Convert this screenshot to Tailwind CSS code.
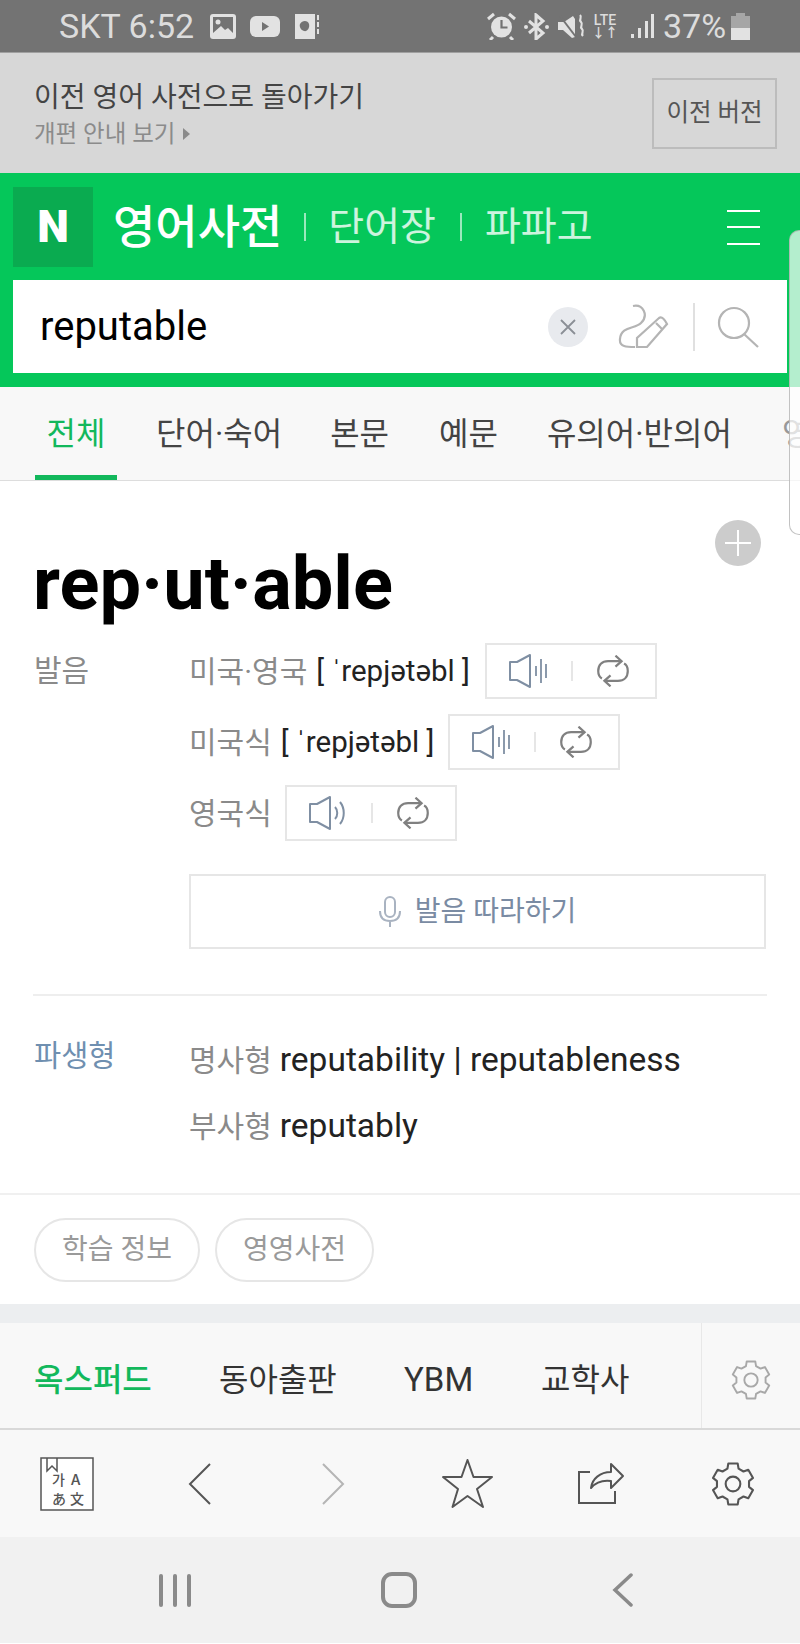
<!DOCTYPE html>
<html lang="ko">
<head>
    <meta charset="UTF-8">
    <meta name="viewport" content="width=device-width, initial-scale=1.0">
    <title>영어사전</title>
    <script src="https://cdn.jsdelivr.net/npm/@tailwindcss/browser@4"></script>
</head>
<body class="font-[Roboto,'Noto_Sans_CJK_KR',sans-serif]">
<svg class="hidden">
    <symbol id="repeat" viewBox="3 3 26 26">
        <path d="M23 8H12C7 8 4 11 4 16c0 3 1 5 3 6M9 24h11c5 0 8-3 8-8 0-3-1-5-3-6" fill="none" stroke="currentColor" stroke-width="1.800"/>
        <path d="M18 3.500l5 4.500-5 4.500M14 19.500l-5 4.500 5 4.500" fill="none" stroke="currentColor" stroke-width="1.800"/>
    </symbol>
    <symbol id="speaker-wave" viewBox="0 0 40 36">
        <path d="M2 9h7L22 2v32L9 27H2z" fill="none" stroke="currentColor" stroke-width="2" stroke-linejoin="round"/>
        <path d="M28 13v10M33 6v24M38 11v14" fill="none" stroke="currentColor" stroke-width="1.800"/>
    </symbol>
    <symbol id="gear" viewBox="0 0 42 42">
        <path d="M16.5 1.500H25.500L26.300 6.400L31 9.100L35.600 7.400L40.100 15.200L36.300 18.300V23.700L40.100 26.800L35.600 34.600L31 32.900L26.300 35.600L25.500 40.500H16.500L15.700 35.600L11 32.900L6.400 34.600L1.900 26.800L5.700 23.700V18.300L1.900 15.200L6.400 7.400L11 9.100L15.700 6.400z" fill="none" stroke="currentColor" stroke-width="2" stroke-linejoin="round"/>
        <circle cx="21" cy="21" r="7" fill="none" stroke="currentColor" stroke-width="2"/>
    </symbol>
</svg>

<div class="relative w-[800px] h-[1644px] overflow-hidden bg-white">
    <!-- status bar -->
    <div class="h-[53px] bg-[#737373] flex items-center text-[#dcdcdc] border-b border-[#a0a0a0]">
        <span class="ml-[59px] w-[138px] text-[34px] leading-none whitespace-nowrap">SKT 6:52</span>
        <svg class="ml-[13px]" width="26" height="25" viewBox="0 0 26 25"><rect width="26" height="25" rx="3" fill="#e2e2e2"/><rect x="3" y="3" width="20" height="16" fill="#737373"/><circle cx="8" cy="8" r="2.500" fill="#e2e2e2"/><path d="M3 19l8-7 4 4 3-2 5 5z" fill="#e2e2e2"/></svg>
        <svg class="ml-[14px]" width="30" height="21" viewBox="0 0 30 21"><rect width="30" height="21" rx="6" fill="#e2e2e2"/><path d="M12 6l7 4.500-7 4.500z" fill="#737373"/></svg>
        <svg class="ml-[14px]" width="25" height="25" viewBox="0 0 25 25"><path d="M1 0h20v25H1z" fill="#e2e2e2"/><path d="M23 1h2v5h-2zM23 8h2v5h-2zM23 15h2v5h-2z" fill="#e2e2e2"/><path d="M6 10c2-4 8-4 9 0 1 4-2 8-5 7-3-1-5-4-4-7z" fill="#737373"/></svg>
        <svg class="ml-[168px]" width="29" height="28" viewBox="0 0 29 28"><circle cx="14.500" cy="15" r="10.500" fill="#e2e2e2"/><path d="M14.500 8v7.500h6" fill="none" stroke="#737373" stroke-width="2.200"/><path d="M1 7l6-5M28 7l-6-5M6 25l-3 3M23 25l3 3" stroke="#e2e2e2" stroke-width="3"/></svg>
        <svg class="ml-[7px]" width="27" height="27" viewBox="0 0 27 27"><path d="M13 2l7 6-7 6 7 6-7 6zM13 14L6 8M13 14l-7 6" fill="none" stroke="#e2e2e2" stroke-width="3"/><circle cx="3" cy="14" r="2" fill="#e2e2e2"/><circle cx="24" cy="14" r="2" fill="#e2e2e2"/></svg>
        <svg class="ml-[7px]" width="29" height="27" viewBox="0 0 29 27"><path d="M1 9h6l9-6 2 3v18l-3 1-9-8H1z" fill="#e2e2e2"/><path d="M3 3l16 21" stroke="#737373" stroke-width="2"/><path d="M23 2c3 3-2 4 1 7s-2 4 1 7-2 4 1 7" fill="none" stroke="#e2e2e2" stroke-width="2.200"/></svg>
        <div class="ml-[6px] w-[26px] flex flex-col items-center text-[14px] leading-[14px] font-medium">
            <span>LTE</span>
            <span class="text-[13px] leading-[12px] font-bold">↓↑</span>
        </div>
        <svg class="ml-[12px]" width="24" height="26" viewBox="0 0 24 26"><path d="M1 21h3v4H1zM8 15h3v10H8zM15 8h3v17h-3zM21 1h3v24h-3z" fill="#e2e2e2"/></svg>
        <span class="ml-[9px] text-[34px] leading-none">37%</span>
        <div class="ml-[5px] w-[19px] h-[27px] flex flex-col items-center">
            <div class="w-[9px] h-[3px] bg-[#a6a6a6]"></div>
            <div class="w-[19px] h-[12px] bg-[#a6a6a6]"></div>
            <div class="w-[19px] h-[12px] bg-[#e2e2e2]"></div>
        </div>
    </div>

    <!-- old version notice -->
    <div class="h-[120px] bg-[#d7d7d7] flex items-center justify-between pl-[34px] pr-[23px]">
        <div class="pt-[2px]">
            <p class="text-[28px] leading-[40px] text-[#444444]">이전 영어 사전으로 돌아가기</p>
            <p class="text-[23.500px] leading-[32px] text-[#8b8b8b] flex items-center gap-[8px]">개편 안내 보기 <span class="w-0 h-0 border-y-[6px] border-y-transparent border-l-[7px] border-l-[#8b8b8b]"></span></p>
        </div>
        <div class="w-[125px] h-[71px] border-2 border-[#bcbcbc] flex items-center justify-center text-[24.500px] text-[#555555]">이전 버전</div>
    </div>

    <!-- green header -->
    <div class="h-[214px] bg-[#05c75a] px-[13px] pt-[14px]">
        <div class="h-[80px] flex items-center">
            <div class="w-[80px] h-[80px] bg-[#0aab50] flex items-center justify-center text-white text-[45px] font-black">N</div>
            <span class="ml-[20px] text-white text-[46px] font-medium leading-none">영어사전</span>
            <span class="ml-[22px] w-[2px] h-[28px] bg-white/60"></span>
            <span class="ml-[22px] text-white/80 text-[39px] leading-none">단어장</span>
            <span class="ml-[24px] w-[2px] h-[28px] bg-white/60"></span>
            <span class="ml-[23px] text-white/80 text-[39px] leading-none">파파고</span>
            <div class="ml-auto mr-[27px] w-[33px] h-[35px] flex flex-col justify-between">
                <div class="h-[2px] bg-white"></div>
                <div class="h-[2px] bg-white"></div>
                <div class="h-[2px] bg-white"></div>
            </div>
        </div>
        <div class="mt-[13px] h-[93px] bg-white flex items-center pl-[27px] pr-[28px]">
            <span class="text-[40px] text-black">reputable</span>
            <div class="ml-auto w-[40px] h-[40px] rounded-full bg-[#e8eaee] flex items-center justify-center">
                <svg width="18" height="18" viewBox="0 0 18 18"><path d="M2 2l14 14M16 2L2 16" stroke="#8b8f96" stroke-width="1.800"/></svg>
            </div>
            <svg class="ml-[30px]" width="52" height="46" viewBox="619 303 52 46" fill="none" stroke="#b4b4b4" stroke-width="2.200">
                <path d="M634 305c10-2 16 9 8 17-6 6-20 3-21 16-1 8 7 8 15 8"/>
                <path d="M638 346v-9l22-20c3-2 6 2 8 6l-20 23zM657 322l6 6"/>
            </svg>
            <div class="ml-[23px] w-[2px] h-[48px] bg-[#e0e0e0]"></div>
            <svg class="ml-[22px]" width="42" height="42" viewBox="0 0 42 42" fill="none" stroke="#b4b4b4" stroke-width="2.200"><circle cx="17" cy="17" r="15"/><path d="M27 28l14 13"/></svg>
        </div>
    </div>

    <!-- section tabs -->
    <div class="h-[94px] bg-[#f8f8f8] border-b border-[#dddddd] flex pl-[35px] text-[32px] text-[#444444] overflow-hidden whitespace-nowrap">
        <div class="w-[82px] shrink-0 flex items-center justify-center text-[#12b85c] border-b-[5px] border-[#12b85c] pt-[5px]">전체</div>
        <span class="ml-[39px] self-center">단어·숙어</span>
        <span class="ml-[48px] self-center">본문</span>
        <span class="ml-[50px] self-center">예문</span>
        <span class="ml-[49px] self-center">유의어·반의어</span>
        <span class="ml-[50px] self-center text-[#999999]">영영</span>
    </div>

    <!-- entry -->
    <div class="h-[823px] relative">
        <div class="pl-[33px] pt-[58px] text-[74px] leading-[90px] font-bold text-black">rep·ut·able</div>

        <div class="mt-[14px] pl-[34px] flex">
            <span class="w-[155px] pt-[8px] leading-[40px] text-[30px] text-[#8a8a8a]">발음</span>
            <div class="flex-1 flex flex-col gap-[15px] pr-[34px]">
                <div class="h-[56px] flex items-center text-[30px] text-[#8a8a8a]">
                    <span>미국·영국</span>
                    <span class="ml-[9px] mr-[15px] text-[#222222] text-[29.500px]">[ ˈrepjətəbl ]</span>
                    <div class="w-[172px] h-[56px] border-2 border-[#e6e6e6] flex items-center text-[#7f8fa3]">
                        <svg class="ml-[21px] w-[40px] h-[36px]"><use href="#speaker-wave"/></svg>
                        <div class="ml-[23px] w-[2px] h-[20px] bg-[#e6e6e6]"></div>
                        <svg class="ml-[24px] w-[32px] h-[32px] text-[#808080]"><use href="#repeat"/></svg>
                    </div>
                </div>
                <div class="h-[56px] flex items-center text-[30px] text-[#8a8a8a]">
                    <span>미국식</span>
                    <span class="ml-[9px] mr-[14px] text-[#222222] text-[29.500px]">[ ˈrepjətəbl ]</span>
                    <div class="w-[172px] h-[56px] border-2 border-[#e6e6e6] flex items-center text-[#7f8fa3]">
                        <svg class="ml-[21px] w-[40px] h-[36px]"><use href="#speaker-wave"/></svg>
                        <div class="ml-[23px] w-[2px] h-[20px] bg-[#e6e6e6]"></div>
                        <svg class="ml-[24px] w-[32px] h-[32px] text-[#808080]"><use href="#repeat"/></svg>
                    </div>
                </div>
                <div class="h-[56px] flex items-center text-[30px] text-[#8a8a8a]">
                    <span>영국식</span>
                    <div class="ml-[13px] w-[172px] h-[56px] border-2 border-[#e6e6e6] flex items-center text-[#7f8fa3]">
                        <svg class="ml-[21px]" width="40" height="36" viewBox="0 0 40 36" fill="none" stroke="currentColor" stroke-width="2"><path d="M2 9h7L22 2v32L9 27H2z" stroke-linejoin="round"/><path d="M27 12c3 3 3 9 0 12M32 7c5 6 5 16 0 22"/></svg>
                        <div class="ml-[23px] w-[2px] h-[20px] bg-[#e6e6e6]"></div>
                        <svg class="ml-[24px] w-[32px] h-[32px] text-[#808080]"><use href="#repeat"/></svg>
                    </div>
                </div>
                <div class="mt-[18px] h-[75px] border-2 border-[#e6e6e6] flex items-center justify-center gap-[14px] text-[28px] text-[#7a8ba3]">
                    <svg width="22" height="31" viewBox="0 0 22 31" fill="none" stroke="#a9b3c1" stroke-width="2"><rect x="6" y="1" width="10" height="20" rx="5"/><path d="M1 15c0 7 4 10 10 10s10-3 10-10M11 25v6"/></svg>
                    <span>발음 따라하기</span>
                </div>
            </div>
        </div>

        <div class="mx-[33px] mt-[45px] border-t-2 border-[#eeeeee]"></div>

        <div class="mt-[38px] pl-[34px] flex">
            <span class="w-[155px] pt-[2px] text-[29.500px] leading-[40px] text-[#6f8fb0]">파생형</span>
            <div class="text-[30px] text-[#8a8a8a]">
                <div class="h-[40px] mt-[6px] flex items-center"><span>명사형</span><span class="ml-[8px] text-[33.500px] text-[#222222]">reputability | reputableness</span></div>
                <div class="h-[40px] mt-[26px] flex items-center"><span>부사형</span><span class="ml-[8px] text-[33.500px] text-[#222222]">reputably</span></div>
            </div>
        </div>

        <div class="mt-[47px] border-t-2 border-[#f0f0f0] pt-[23px] pl-[34px] flex gap-[15px] text-[28px] text-[#9a9a9a]">
            <div class="w-[166px] h-[64px] rounded-full border-2 border-[#e6e6e6] flex items-center justify-center">학습 정보</div>
            <div class="w-[159px] h-[64px] rounded-full border-2 border-[#e6e6e6] flex items-center justify-center">영영사전</div>
        </div>

        <div class="absolute left-[715px] top-[39px] w-[46px] h-[46px] rounded-full bg-[#cccccc] flex items-center justify-center">
            <svg width="26" height="26" viewBox="0 0 26 26"><path d="M13 0v26M0 13h26" stroke="#ffffff" stroke-width="2"/></svg>
        </div>
    </div>

    <div class="h-[19px] bg-[#eceef0]"></div>

    <!-- dictionary tabs -->
    <div class="h-[105px] bg-[#f8f8f8] flex items-center pl-[34px] text-[32px] text-[#333333] whitespace-nowrap">
        <span class="mt-[9px] w-[118px] text-[#12b85c] font-medium">옥스퍼드</span>
        <span class="mt-[9px] ml-[67px] w-[118px]">동아출판</span>
        <span class="mt-[9px] ml-[67px] w-[70px] text-[33px]">YBM</span>
        <span class="mt-[9px] ml-[67px] w-[88px]">교학사</span>
        <div class="ml-auto w-[99px] h-full border-l border-[#e8e8e8] flex items-center justify-center text-[#a8a8a8]">
            <svg class="mt-[8px] w-[40px] h-[40px]"><use href="#gear"/></svg>
        </div>
    </div>

    <!-- browser toolbar -->
    <div class="h-[109px] bg-[#f8f8f8] border-t-2 border-[#d9d9d9] flex items-center text-[#555555]">
        <svg class="ml-[40px] font-['Noto_Sans_CJK_KR'] font-medium" width="54" height="54" viewBox="0 0 54 54">
            <rect x="1" y="1" width="52" height="52" fill="#ffffff" stroke="#555555" stroke-width="1.500"/>
            <path d="M7 1v13l5-5 5 5V1" fill="none" stroke="#555555" stroke-width="1.500"/>
            <text x="12" y="28" font-size="14" fill="#555555">가</text>
            <text x="31" y="28" font-size="15" fill="#555555">A</text>
            <text x="12" y="47" font-size="14" fill="#555555">あ</text>
            <text x="30" y="47" font-size="14" fill="#555555">文</text>
        </svg>
        <svg class="ml-[94px]" width="24" height="42" viewBox="0 0 24 42"><path d="M22 1L2 21l20 20" fill="none" stroke="#555555" stroke-width="2"/></svg>
        <svg class="ml-[109px]" width="24" height="42" viewBox="0 0 24 42"><path d="M2 1l20 20L2 41" fill="none" stroke="#b5b5b5" stroke-width="2"/></svg>
        <svg class="ml-[97px]" width="52" height="50" viewBox="441 1459 52 50" fill="none" stroke="#555555" stroke-width="2" stroke-linejoin="round"><path d="M466.500 1460l6 17H491l-15 12 6 18-15.500-11-15 11 5.500-18-15-12h18.500z"/></svg>
        <svg class="ml-[84px]" width="48" height="42" viewBox="578 1462 48 42" fill="none" stroke="#555555" stroke-width="2"><path d="M590 1471h-11v31h36v-12"/><path d="M591 1487c1-9 9-16 20-16v-8l12 12-12 12v-7c-8-1-15 1-20 7z" stroke-linejoin="round"/></svg>
        <svg class="ml-[85px] w-[44px] h-[44px]"><use href="#gear"/></svg>
    </div>

    <!-- android nav -->
    <div class="h-[106px] bg-[#f1f1f1] flex items-center text-[#8a8a8a]">
        <div class="ml-[159px] w-[32px] h-[33px] flex justify-between">
            <div class="w-[4px] bg-[#8a8a8a] rounded-full"></div>
            <div class="w-[4px] bg-[#8a8a8a] rounded-full"></div>
            <div class="w-[4px] bg-[#8a8a8a] rounded-full"></div>
        </div>
        <div class="ml-[190px] w-[36px] h-[36px] rounded-[11px] border-[4px] border-[#8a8a8a]"></div>
        <svg class="ml-[195px]" width="22" height="34" viewBox="0 0 22 34"><path d="M19 2L3 17l16 15" fill="none" stroke="#8a8a8a" stroke-width="3.500" stroke-linecap="round"/></svg>
    </div>

    <!-- edge panel handle -->
    <div class="absolute left-[789px] top-[230px] w-[20px] h-[305px] rounded-l-[10px] bg-white/70 border border-[#a8a8a8]/70"></div>
</div>
</body>
</html>
